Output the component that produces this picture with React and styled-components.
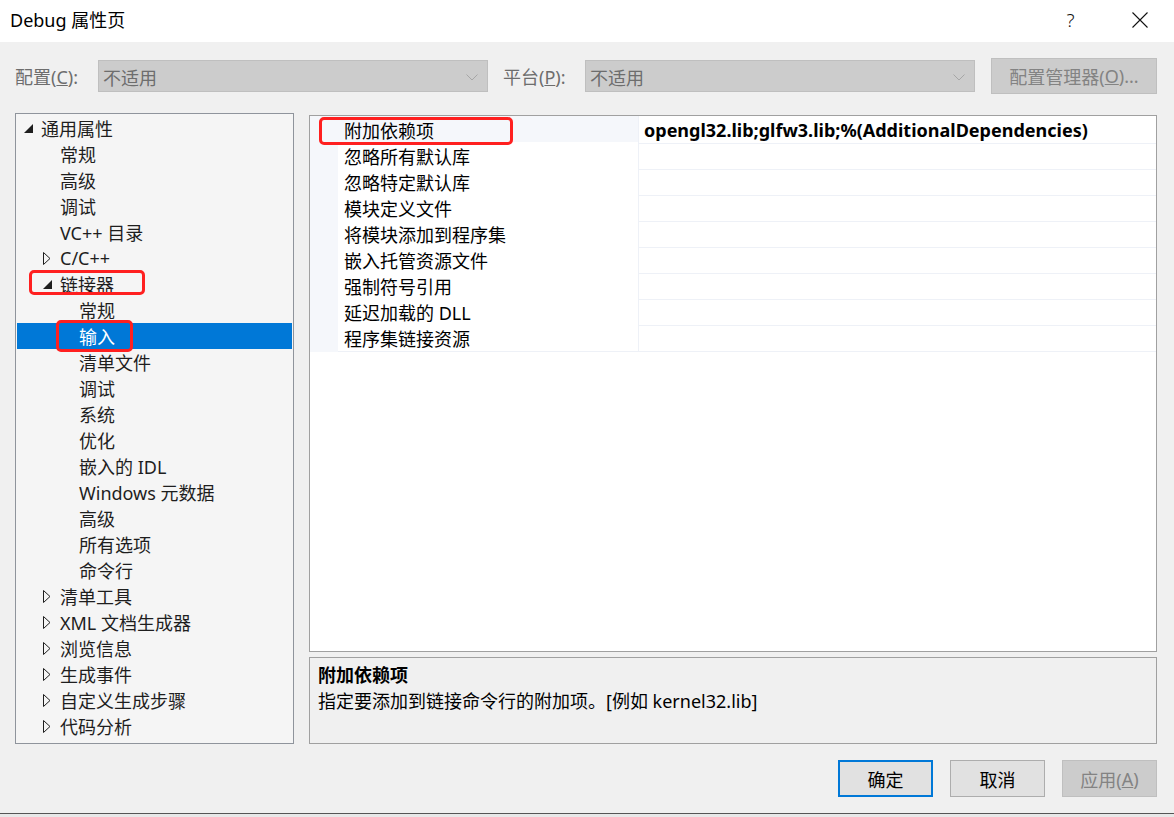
import styled, { createGlobalStyle } from 'styled-components';

const GlobalStyle = createGlobalStyle`
  html, body {
    margin: 0;
    padding: 0;
    background: #f0f0f0;
    overflow: hidden;
  }
  body {
    font-family: "Noto Sans", "Noto Sans CJK SC", sans-serif;
  }
  * { box-sizing: border-box; }
`;

const Window = styled.div`
  width: 1174px;
  height: 817px;
  display: flex;
  flex-direction: column;
  background: #f0f0f0;
  color: #000;
  font-size: 18px;
`;

const TitleBar = styled.div`
  height: 42px;
  flex-shrink: 0;
  background: #fff;
  display: flex;
  align-items: center;
  padding-left: 10px;
`;

const Title = styled.div`
  flex: 1;
  line-height: 1;
  margin-top: -2px;
`;

const TitleButton = styled.div`
  width: 69px;
  height: 42px;
  display: flex;
  align-items: center;
  justify-content: center;
  font-size: 19px;
  font-weight: 300;
  color: #111;
  margin-top: -2px;
`;

const Content = styled.div`
  flex: 1;
  display: flex;
  flex-direction: column;
  padding: 0 17px 0 15px;
`;

const ConfigRow = styled.div`
  margin-top: 16px;
  height: 36px;
  display: flex;
  align-items: center;
`;

const ConfigLabel = styled.div`
  width: ${p => p.$w}px;
  margin-left: ${p => p.$ml || 0}px;
  color: #6d6d6d;
  line-height: 1;
  padding-top: 2px;
`;

const Combo = styled.div`
  width: 390px;
  height: 32px;
  border: 1px solid #bfbfbf;
  background: #cccccc;
  color: #6d6d6d;
  display: flex;
  align-items: center;
  justify-content: space-between;
  padding: 2px 9px 0 4px;
`;

const Button = styled.div`
  width: ${p => p.$w || 95}px;
  height: ${p => p.$h || 37}px;
  margin-left: ${p => p.$ml || 0}px;
  display: flex;
  align-items: center;
  justify-content: center;
  background: ${p => (p.$disabled ? '#cccccc' : '#e1e1e1')};
  color: ${p => (p.$disabled ? '#838383' : '#000')};
  border: ${p => (p.$default ? '2px solid #0078d7' : p.$disabled ? '1px solid #bfbfbf' : '1px solid #adadad')};
`;

const Main = styled.div`
  margin-top: 19px;
  height: 631px;
  display: flex;
  gap: 15px;
`;

const Tree = styled.div`
  width: 279px;
  border: 1px solid #8f949c;
  background: #f5f5f5;
  padding: 1px;
`;

const TreeRow = styled.div`
  position: relative;
  height: 26px;
  display: flex;
  align-items: center;
  padding-left: ${p => 7 + p.$level * 19}px;
  background: ${p => (p.$selected ? '#0078d7' : 'transparent')};
  color: ${p => (p.$selected ? '#fff' : '#1e1e1e')};
  white-space: nowrap;
`;

const Toggle = styled.span`
  width: 17px;
  flex-shrink: 0;
  display: flex;
  align-items: center;
`;

const RedMark = styled.div`
  position: absolute;
  z-index: 2;
  left: ${p => p.$l}px;
  top: ${p => p.$t}px;
  width: ${p => p.$w}px;
  height: ${p => p.$h}px;
  border: 3px solid #ff2020;
  border-radius: 5px;
  pointer-events: none;
`;

const RightCol = styled.div`
  width: 848px;
  display: flex;
  flex-direction: column;
`;

const Grid = styled.div`
  margin-top: 2px;
  flex: 1;
  border: 1px solid #a0a0a0;
  background: #fff;
`;

const GridRow = styled.div`
  position: relative;
  height: 26px;
  display: grid;
  grid-template-columns: 28px 300px 1fr;
`;

const Gutter = styled.div`
  background: #f5f7fb;
`;

const NameCell = styled.div`
  padding: 1px 0 0 6px;
  display: flex;
  align-items: center;
  background: ${p => (p.$selected ? '#f5f7fb' : '#fff')};
  border-bottom: 1px solid #eef1f7;
`;

const ValueCell = styled.div`
  padding: 1px 0 0 5px;
  display: flex;
  align-items: center;
  font-weight: 700;
  border-bottom: 1px solid #eef1f7;
  border-left: 1px solid #eef1f7;
  white-space: nowrap;
`;

const Desc = styled.div`
  margin-top: 5px;
  height: 87px;
  border: 1px solid #a0a0a0;
  background: #f0f0f0;
  padding: 4px 8px;
  line-height: 26px;
`;

const DescTitle = styled.div`
  font-weight: 700;
`;

const Footer = styled.div`
  margin-top: 16px;
  display: flex;
  justify-content: flex-end;
  gap: 17px;
`;

const BottomEdge = styled.div`
  margin-top: auto;
  height: 4px;
  flex-shrink: 0;
  border-top: 1px solid #555;
  background: #e8e8e8;
`;

const Chevron = () => (
  <svg width="12" height="7" viewBox="0 0 12 7">
    <polyline points="0.5,0.5 6,6 11.5,0.5" fill="none" stroke="#a6a6a6" strokeWidth="1" />
  </svg>
);

const Expanded = () => (
  <svg width="9" height="9" viewBox="0 0 9 9">
    <polygon points="9,0 9,9 0,9" fill="#1e1e1e" />
  </svg>
);

const Collapsed = () => (
  <svg width="8" height="13" viewBox="0 0 8 13">
    <polygon points="0.5,0.5 7,6.5 0.5,12.5" fill="none" stroke="#1e1e1e" strokeWidth="1" />
  </svg>
);

const CloseIcon = () => (
  <svg width="16" height="16" viewBox="0 0 16 16">
    <path d="M0.5 0.5 L15.5 15.5 M15.5 0.5 L0.5 15.5" stroke="#111" strokeWidth="1.1" fill="none" />
  </svg>
);

const treeItems = [
  { label: '通用属性', level: 0, state: 'open' },
  { label: '常规', level: 1 },
  { label: '高级', level: 1 },
  { label: '调试', level: 1 },
  { label: 'VC++ 目录', level: 1 },
  { label: 'C/C++', level: 1, state: 'closed' },
  { label: '链接器', level: 1, state: 'open', mark: { l: 12, t: -1, w: 116, h: 25 } },
  { label: '常规', level: 2 },
  { label: '输入', level: 2, selected: true, mark: { l: 39, t: -3, w: 77, h: 32 } },
  { label: '清单文件', level: 2 },
  { label: '调试', level: 2 },
  { label: '系统', level: 2 },
  { label: '优化', level: 2 },
  { label: '嵌入的 IDL', level: 2 },
  { label: 'Windows 元数据', level: 2 },
  { label: '高级', level: 2 },
  { label: '所有选项', level: 2 },
  { label: '命令行', level: 2 },
  { label: '清单工具', level: 1, state: 'closed' },
  { label: 'XML 文档生成器', level: 1, state: 'closed' },
  { label: '浏览信息', level: 1, state: 'closed' },
  { label: '生成事件', level: 1, state: 'closed' },
  { label: '自定义生成步骤', level: 1, state: 'closed' },
  { label: '代码分析', level: 1, state: 'closed' },
];

const props = [
  { name: '附加依赖项', value: 'opengl32.lib;glfw3.lib;%(AdditionalDependencies)', selected: true },
  { name: '忽略所有默认库' },
  { name: '忽略特定默认库' },
  { name: '模块定义文件' },
  { name: '将模块添加到程序集' },
  { name: '嵌入托管资源文件' },
  { name: '强制符号引用' },
  { name: '延迟加载的 DLL' },
  { name: '程序集链接资源' },
];

export default function App() {
  return (
    <>
      <GlobalStyle />
      <Window>
        <TitleBar>
          <Title>Debug 属性页</Title>
          <TitleButton>?</TitleButton>
          <TitleButton><CloseIcon /></TitleButton>
        </TitleBar>
        <Content>
          <ConfigRow>
            <ConfigLabel $w={83}>配置(<u>C</u>):</ConfigLabel>
            <Combo>不适用<Chevron /></Combo>
            <ConfigLabel $w={82} $ml={15}>平台(<u>P</u>):</ConfigLabel>
            <Combo>不适用<Chevron /></Combo>
            <Button $w={166} $h={36} $ml={16} $disabled>配置管理器(<u>O</u>)...</Button>
          </ConfigRow>

          <Main>
            <Tree>
              {treeItems.map((it, i) => (
                <TreeRow key={i} $level={it.level} $selected={it.selected}>
                  <Toggle>
                    {it.state === 'open' && <Expanded />}
                    {it.state === 'closed' && <Collapsed />}
                  </Toggle>
                  {it.label}
                  {it.mark && <RedMark $l={it.mark.l} $t={it.mark.t} $w={it.mark.w} $h={it.mark.h} />}
                </TreeRow>
              ))}
            </Tree>

            <RightCol>
              <Grid>
                {props.map((p, i) => (
                  <GridRow key={i}>
                    <Gutter />
                    <NameCell $selected={p.selected}>{p.name}</NameCell>
                    <ValueCell>{p.value}</ValueCell>
                    {i === 0 && <RedMark $l={9} $t={1} $w={194} $h={28} />}
                  </GridRow>
                ))}
              </Grid>
              <Desc>
                <DescTitle>附加依赖项</DescTitle>
                <div>指定要添加到链接命令行的附加项。[例如 kernel32.lib]</div>
              </Desc>
            </RightCol>
          </Main>

          <Footer>
            <Button $default>确定</Button>
            <Button>取消</Button>
            <Button $disabled>应用(<u>A</u>)</Button>
          </Footer>
        </Content>
        <BottomEdge />
      </Window>
    </>
  );
}
